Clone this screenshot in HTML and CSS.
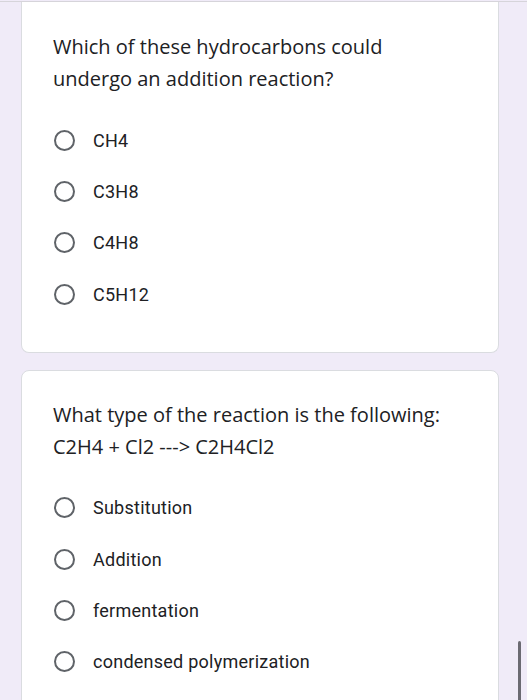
FILE: index.html
```html
<!DOCTYPE html>
<html>
<head>
<meta charset="utf-8">
<link rel="stylesheet" href="styles.css">
</head>
<body>
<div class="topline"></div>
<div class="page">
  <div class="card">
    <div class="question">Which of these hydrocarbons could<br>undergo an addition reaction?</div>
    <div class="options">
      <div class="option"><span class="radio"></span><span class="label">CH4</span></div>
      <div class="option"><span class="radio"></span><span class="label">C3H8</span></div>
      <div class="option"><span class="radio"></span><span class="label">C4H8</span></div>
      <div class="option"><span class="radio"></span><span class="label">C5H12</span></div>
    </div>
  </div>
  <div class="card">
    <div class="question">What type of the reaction is the following:<br>C2H4 + Cl2 ---&gt; C2H4Cl2</div>
    <div class="options">
      <div class="option"><span class="radio"></span><span class="label">Substitution</span></div>
      <div class="option"><span class="radio"></span><span class="label">Addition</span></div>
      <div class="option"><span class="radio"></span><span class="label">fermentation</span></div>
      <div class="option"><span class="radio"></span><span class="label">condensed polymerization</span></div>
    </div>
  </div>
</div>
<div class="scrollbar"></div>
</body>
</html>
```

FILE: styles.css
```css
html, body {
  margin: 0;
  padding: 0;
  height: 100%;
  overflow: hidden;
}
body {
  background: #f0ebf8;
  font-family: Roboto, "Liberation Sans", sans-serif;
  color: #202124;
  position: relative;
}
.topline {
  height: 1px;
  margin-top: 1px;
  background: #d6d4da;
}
.page {
  display: flex;
  flex-direction: column;
  gap: 17px;
  padding: 0 28px 0 21px;
}
.card {
  background: #fff;
  border: 1px solid #dadce0;
  border-radius: 8px;
  padding: 28px 32px 32px 31px;
}
.card:first-child {
  border-top: none;
  border-top-left-radius: 0;
  border-top-right-radius: 0;
  padding-top: 29px;
}
.question {
  font-family: "Open Sans", Roboto, sans-serif;
  font-size: 20px;
  line-height: 32px;
  letter-spacing: 0;
  margin-bottom: 19.5px;
}
.options {
  display: flex;
  flex-direction: column;
}
.option {
  height: 51.33px;
  display: flex;
  align-items: center;
}
.radio {
  box-sizing: border-box;
  width: 21px;
  height: 21px;
  border: 2px solid #5f6368;
  border-radius: 50%;
  margin-left: 1px;
  margin-right: 18px;
  flex: none;
}
.label {
  font-size: 18px;
  color: #202124;
  letter-spacing: 0.25px;
}
.scrollbar {
  position: absolute;
  left: 518px;
  top: 641px;
  width: 3px;
  height: 60px;
  border-radius: 2px;
  background: #6b6a72;
}
```
